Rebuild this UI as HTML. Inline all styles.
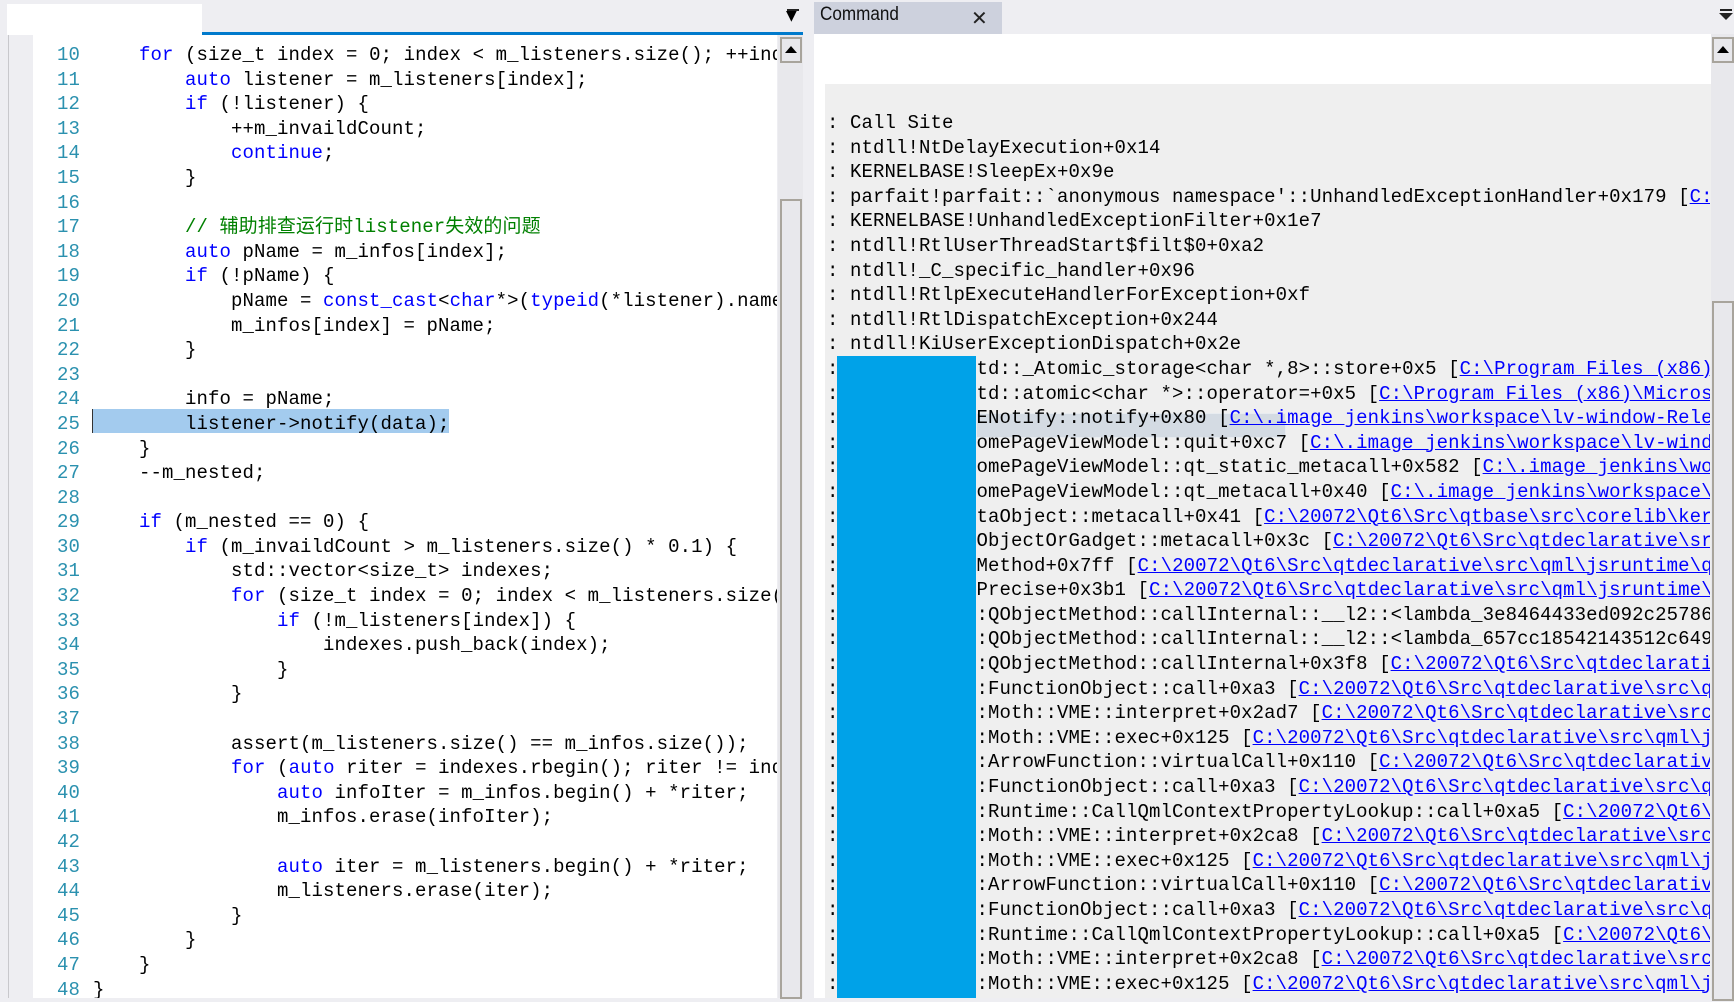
<!DOCTYPE html>
<html><head><meta charset="utf-8"><style>
*{margin:0;padding:0;box-sizing:border-box}
body{width:1734px;height:998px;overflow:hidden;background:#eeeef2;position:relative;font-family:"Liberation Mono","Noto Sans CJK SC",monospace}
.abs{position:absolute}
.mono{font-family:"Liberation Mono","Noto Sans CJK SC",monospace;font-size:19px;letter-spacing:0.1px;line-height:24.6px;white-space:pre}
.k{color:#0000ff}.c{color:#008000}
a{color:#0000ff;text-decoration:underline}
.num{color:#2b91af;text-align:right;width:80px}
.sb{background:#e8e8ec}
.box{border:2px solid #a8a49c;background:#e8e8ec}
</style></head><body>
<!-- left tab bar -->
<div class="abs" style="left:7px;top:4px;width:195px;height:31px;background:#fff"></div>
<div class="abs" style="left:202px;top:32px;width:601px;height:3px;background:#007acc"></div>
<div class="abs" style="left:786px;top:9px;font-size:14px;line-height:14px;font-family:'DejaVu Sans'">&#9660;</div>
<div class="abs" style="left:787px;top:9px;width:12px;height:2px;background:#222"></div>
<!-- gutter / editor -->
<div class="abs" style="left:8px;top:35px;width:1px;height:963px;background:#c8c8cc"></div>
<div class="abs" style="left:33px;top:35px;width:744px;height:963px;background:#fff"></div>
<div class="abs" style="left:93px;top:409px;width:356px;height:24px;background:#a3cbee"></div>
<div class="abs" style="left:92px;top:409px;width:1px;height:24px;background:#333"></div>
<div class="abs mono num" style="left:0;top:43px">10
11
12
13
14
15
16
17
18
19
20
21
22
23
24
25
26
27
28
29
30
31
32
33
34
35
36
37
38
39
40
41
42
43
44
45
46
47
48</div>
<div class="abs" style="left:93px;top:35px;width:684px;height:963px;overflow:hidden">
<div class="mono" style="position:absolute;left:0;top:8px">    <span class="k">for</span> (size_t index = 0; index &lt; m_listeners.size(); ++index) {
        <span class="k">auto</span> listener = m_listeners[index];
        <span class="k">if</span> (!listener) {
            ++m_invaildCount;
            <span class="k">continue</span>;
        }

        <span class="c">// 辅助排查运行时listener失效的问题</span>
        <span class="k">auto</span> pName = m_infos[index];
        <span class="k">if</span> (!pName) {
            pName = <span class="k">const_cast</span>&lt;<span class="k">char</span>*&gt;(<span class="k">typeid</span>(*listener).name());
            m_infos[index] = pName;
        }

        info = pName;
        listener-&gt;notify(data);
    }
    --m_nested;

    <span class="k">if</span> (m_nested == 0) {
        <span class="k">if</span> (m_invaildCount &gt; m_listeners.size() * 0.1) {
            std::vector&lt;size_t&gt; indexes;
            <span class="k">for</span> (size_t index = 0; index &lt; m_listeners.size(); ++index) {
                <span class="k">if</span> (!m_listeners[index]) {
                    indexes.push_back(index);
                }
            }

            assert(m_listeners.size() == m_infos.size());
            <span class="k">for</span> (<span class="k">auto</span> riter = indexes.rbegin(); riter != indexes.rend(); ++riter) {
                <span class="k">auto</span> infoIter = m_infos.begin() + *riter;
                m_infos.erase(infoIter);

                <span class="k">auto</span> iter = m_listeners.begin() + *riter;
                m_listeners.erase(iter);
            }
        }
    }
}</div></div>
<!-- left scrollbar -->
<div class="abs sb" style="left:778px;top:35px;width:25px;height:963px"></div>
<div class="abs box" style="left:780px;top:37px;width:22px;height:26px"></div>
<div class="abs" style="left:785px;top:46px;width:0;height:0;border-left:6px solid transparent;border-right:6px solid transparent;border-bottom:7px solid #000"></div>
<div class="abs box" style="left:780px;top:199px;width:22px;height:800px"></div>
<!-- right tab bar -->
<div class="abs" style="left:814px;top:2px;width:188px;height:32px;background:#cdd1dd"></div>
<div class="abs" style="left:820px;top:4px;font-family:'Liberation Sans',sans-serif;font-size:19px;color:#111;transform:scaleX(0.9);transform-origin:left">Command</div>
<div class="abs" style="left:971px;top:6px;font-family:'DejaVu Sans',sans-serif;font-size:20px;color:#222">✕</div>
<div class="abs" style="left:1720px;top:9px;width:12px;height:2px;background:#222"></div>
<div class="abs" style="left:1719px;top:13px;width:0;height:0;border-left:7px solid transparent;border-right:7px solid transparent;border-top:7px solid #222"></div>
<div class="abs" style="left:814px;top:34px;width:920px;height:964px;background:#fff"></div>
<div class="abs" style="left:825px;top:84px;width:886px;height:914px;background:#efefef"></div>
<div class="abs" style="left:976px;top:413px;width:310px;height:25px;background:#d4dbe3;border:1px solid #e8ecf0"></div>
<div class="abs" style="left:825px;top:111px;width:885px;height:887px;overflow:hidden">
<div class="mono" style="position:absolute;left:2px;top:0">: Call Site
: ntdll!NtDelayExecution+0x14
: KERNELBASE!SleepEx+0x9e
: parfait!parfait::`anonymous namespace'::UnhandledExceptionHandler+0x179 [<a>C:\parfait\src</a>
: KERNELBASE!UnhandledExceptionFilter+0x1e7
: ntdll!RtlUserThreadStart$filt$0+0xa2
: ntdll!_C_specific_handler+0x96
: ntdll!RtlpExecuteHandlerForException+0xf
: ntdll!RtlDispatchException+0x244
: ntdll!KiUserExceptionDispatch+0x2e
: xxxxxxxxxxxtd::_Atomic_storage&lt;char *,8&gt;::store+0x5 [<a>C:\Program Files (x86)\Microsoft</a>
: xxxxxxxxxxxtd::atomic&lt;char *&gt;::operator=+0x5 [<a>C:\Program Files (x86)\Microsoft</a>
: xxxxxxxxxxxENotify::notify+0x80 [<a>C:\.image_jenkins\workspace\lv-window-Release</a>
: xxxxxxxxxxxomePageViewModel::quit+0xc7 [<a>C:\.image_jenkins\workspace\lv-window</a>
: xxxxxxxxxxxomePageViewModel::qt_static_metacall+0x582 [<a>C:\.image_jenkins\workspace</a>
: xxxxxxxxxxxomePageViewModel::qt_metacall+0x40 [<a>C:\.image_jenkins\workspace\lv</a>
: xxxxxxxxxxxtaObject::metacall+0x41 [<a>C:\20072\Qt6\Src\qtbase\src\corelib\kernel</a>
: xxxxxxxxxxxObjectOrGadget::metacall+0x3c [<a>C:\20072\Qt6\Src\qtdeclarative\src</a>
: xxxxxxxxxxxMethod+0x7ff [<a>C:\20072\Qt6\Src\qtdeclarative\src\qml\jsruntime\qv4</a>
: xxxxxxxxxxxPrecise+0x3b1 [<a>C:\20072\Qt6\Src\qtdeclarative\src\qml\jsruntime\qv4</a>
: xxxxxxxxxxx:QObjectMethod::callInternal::__l2::&lt;lambda_3e8464433ed092c25786&gt;
: xxxxxxxxxxx:QObjectMethod::callInternal::__l2::&lt;lambda_657cc18542143512c649&gt;
: xxxxxxxxxxx:QObjectMethod::callInternal+0x3f8 [<a>C:\20072\Qt6\Src\qtdeclarative</a>
: xxxxxxxxxxx:FunctionObject::call+0xa3 [<a>C:\20072\Qt6\Src\qtdeclarative\src\qml</a>
: xxxxxxxxxxx:Moth::VME::interpret+0x2ad7 [<a>C:\20072\Qt6\Src\qtdeclarative\src\qml</a>
: xxxxxxxxxxx:Moth::VME::exec+0x125 [<a>C:\20072\Qt6\Src\qtdeclarative\src\qml\jsruntime</a>
: xxxxxxxxxxx:ArrowFunction::virtualCall+0x110 [<a>C:\20072\Qt6\Src\qtdeclarative\src</a>
: xxxxxxxxxxx:FunctionObject::call+0xa3 [<a>C:\20072\Qt6\Src\qtdeclarative\src\qml</a>
: xxxxxxxxxxx:Runtime::CallQmlContextPropertyLookup::call+0xa5 [<a>C:\20072\Qt6\Src</a>
: xxxxxxxxxxx:Moth::VME::interpret+0x2ca8 [<a>C:\20072\Qt6\Src\qtdeclarative\src\qml</a>
: xxxxxxxxxxx:Moth::VME::exec+0x125 [<a>C:\20072\Qt6\Src\qtdeclarative\src\qml\jsruntime</a>
: xxxxxxxxxxx:ArrowFunction::virtualCall+0x110 [<a>C:\20072\Qt6\Src\qtdeclarative\src</a>
: xxxxxxxxxxx:FunctionObject::call+0xa3 [<a>C:\20072\Qt6\Src\qtdeclarative\src\qml</a>
: xxxxxxxxxxx:Runtime::CallQmlContextPropertyLookup::call+0xa5 [<a>C:\20072\Qt6\Src</a>
: xxxxxxxxxxx:Moth::VME::interpret+0x2ca8 [<a>C:\20072\Qt6\Src\qtdeclarative\src\qml</a>
: xxxxxxxxxxx:Moth::VME::exec+0x125 [<a>C:\20072\Qt6\Src\qtdeclarative\src\qml\jsruntime</a></div></div>
<div class="abs" style="left:837px;top:356px;width:139px;height:642px;background:#00a2e8"></div>
<!-- right scrollbar -->
<div class="abs sb" style="left:1711px;top:34px;width:23px;height:964px"></div>
<div class="abs box" style="left:1712px;top:37px;width:22px;height:26px"></div>
<div class="abs" style="left:1717px;top:46px;width:0;height:0;border-left:6px solid transparent;border-right:6px solid transparent;border-bottom:7px solid #000"></div>
<div class="abs box" style="left:1712px;top:301px;width:22px;height:700px"></div>
</body></html>
